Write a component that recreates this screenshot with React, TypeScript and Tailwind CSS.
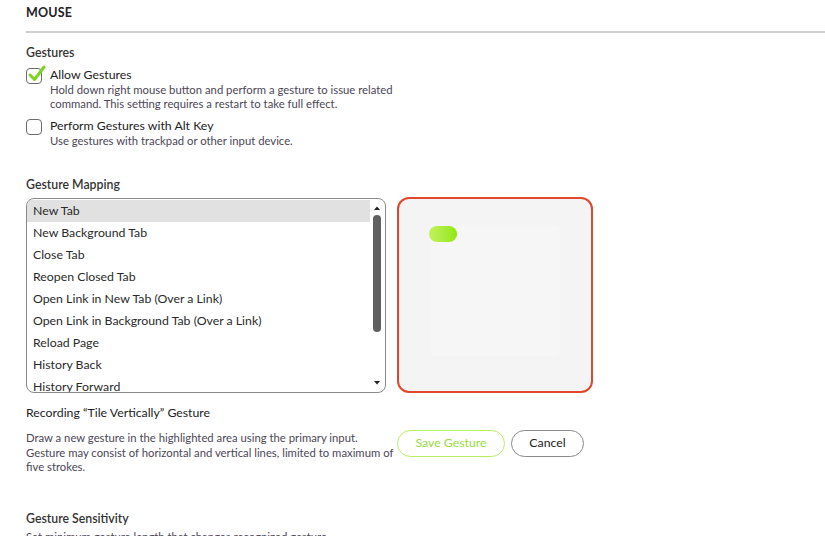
import React from "react";

const items = [
  "New Tab",
  "New Background Tab",
  "Close Tab",
  "Reopen Closed Tab",
  "Open Link in New Tab (Over a Link)",
  "Open Link in Background Tab (Over a Link)",
  "Reload Page",
  "History Back",
  "History Forward",
];

function Check({ checked }: { checked?: boolean }) {
  return (
    <div className="relative w-[16px] h-[16px] shrink-0 rounded-[4px] border border-[#6b6b6b] bg-white">
      {checked && (
        <svg className="absolute left-[0px] top-[-5px]" width="20" height="20" viewBox="0 0 20 20">
          <path d="M3 11 L7.5 15.5 L17 3" fill="none" stroke="#7ed321" strokeWidth="3" strokeLinecap="round" strokeLinejoin="round" />
        </svg>
      )}
    </div>
  );
}

export default function App() {
  return (
    <div className="w-[825px] h-[536px] overflow-hidden bg-white text-[#222]" style={{ fontFamily: "Lato, 'Noto Sans', sans-serif" }}>
      <div className="pl-[26px]">
        <div className="pt-[4px] h-[31px] text-[12.5px] font-bold text-[#222] tracking-[0.2px]">MOUSE</div>
        <div className="h-[2px] bg-[#d0d0d0]" />
        <div className="pt-[12px] text-[12.3px] font-semibold text-[#333] leading-[16px]">Gestures</div>
        <div className="mt-[6px] flex gap-[8px]">
          <div className="pt-[1px]"><Check checked /></div>
          <div>
            <div className="text-[12.3px] leading-[16px] text-[#222]">Allow Gestures</div>
            <div className="text-[11.3px] leading-[14px] text-[#4c4656]">
              Hold down right mouse button and perform a gesture to issue related
              <br />
              command. This setting requires a restart to take full effect.
            </div>
          </div>
        </div>
        <div className="mt-[7px] flex gap-[8px]">
          <div className="pt-[1px]"><Check /></div>
          <div>
            <div className="text-[12.3px] leading-[16px] text-[#222]">Perform Gestures with Alt Key</div>
            <div className="text-[11.3px] leading-[14px] text-[#4c4656]">Use gestures with trackpad or other input device.</div>
          </div>
        </div>

        <div className="mt-[29px] text-[12.3px] font-semibold text-[#333] leading-[16px]">Gesture Mapping</div>

        <div className="mt-[5px] flex items-start gap-[11px]">
          <div className="relative w-[360px] h-[195px] rounded-[8px] border border-[#8a8a8a] overflow-hidden bg-white">
            <div className="pt-[1px]">
              {items.map((t, i) => (
                <div
                  key={t}
                  className={`h-[22px] pl-[6px] mr-[15px] flex items-center text-[12.3px] text-[#2a2a2a] ${i === 0 ? "bg-[#e1e1e1]" : ""}`}
                >
                  {t}
                </div>
              ))}
            </div>
            <div className="absolute right-[3px] top-[3px] bottom-[3px] w-[10px] flex flex-col items-center">
              <svg width="8" height="6" viewBox="0 0 8 6" className="mt-[3px]"><path d="M1 5 L4 1.5 L7 5 Z" fill="#222" /></svg>
              <div className="mt-[4px] w-[8px] h-[117px] rounded-full bg-[#606060]" />
              <div className="flex-1" />
              <svg width="8" height="6" viewBox="0 0 8 6" className="mb-[3px]"><path d="M1 1 L4 4.5 L7 1 Z" fill="#222" /></svg>
            </div>
          </div>
          <div className="relative w-[196px] h-[196px] -mt-[1px] rounded-[12px] border-2 border-[#e2472b] bg-[#f4f4f4]">
            <div className="absolute left-[31px] top-[27px] w-[130px] h-[130px] rounded-[6px] bg-[#f6f6f6]" />
            <div className="absolute left-[30px] top-[27px] w-[28px] h-[16px] rounded-full bg-gradient-to-r from-[#c4f05a] to-[#8fe800]" />
          </div>
        </div>

        <div className="mt-[12px] text-[12.3px] leading-[16px] text-[#222]">Recording “Tile Vertically” Gesture</div>
        <div className="mt-[10px] flex items-start">
          <div className="w-[371px] text-[11.3px] leading-[14.5px] text-[#4c4656]">
            Draw a new gesture in the highlighted area using the primary input.
            <br />
            Gesture may consist of horizontal and vertical lines, limited to maximum of
            <br />
            five strokes.
          </div>
          <div className="flex gap-[6px] -mt-[1px]">
            <button className="h-[27px] w-[108px] rounded-full border border-[#b8ee62] text-[12.3px] text-[#97dd3e] bg-white">Save Gesture</button>
            <button className="h-[27px] w-[73px] rounded-full border border-[#8a8a8a] text-[12.3px] text-[#222] bg-white">Cancel</button>
          </div>
        </div>

        <div className="mt-[36px] text-[12.3px] font-semibold text-[#333] leading-[16px]">Gesture Sensitivity</div>
        <div className="mt-[3px] text-[11.3px] leading-[14px] text-[#4c4656]">Set minimum gesture length that changes recognized gesture.</div>
      </div>
    </div>
  );
}
